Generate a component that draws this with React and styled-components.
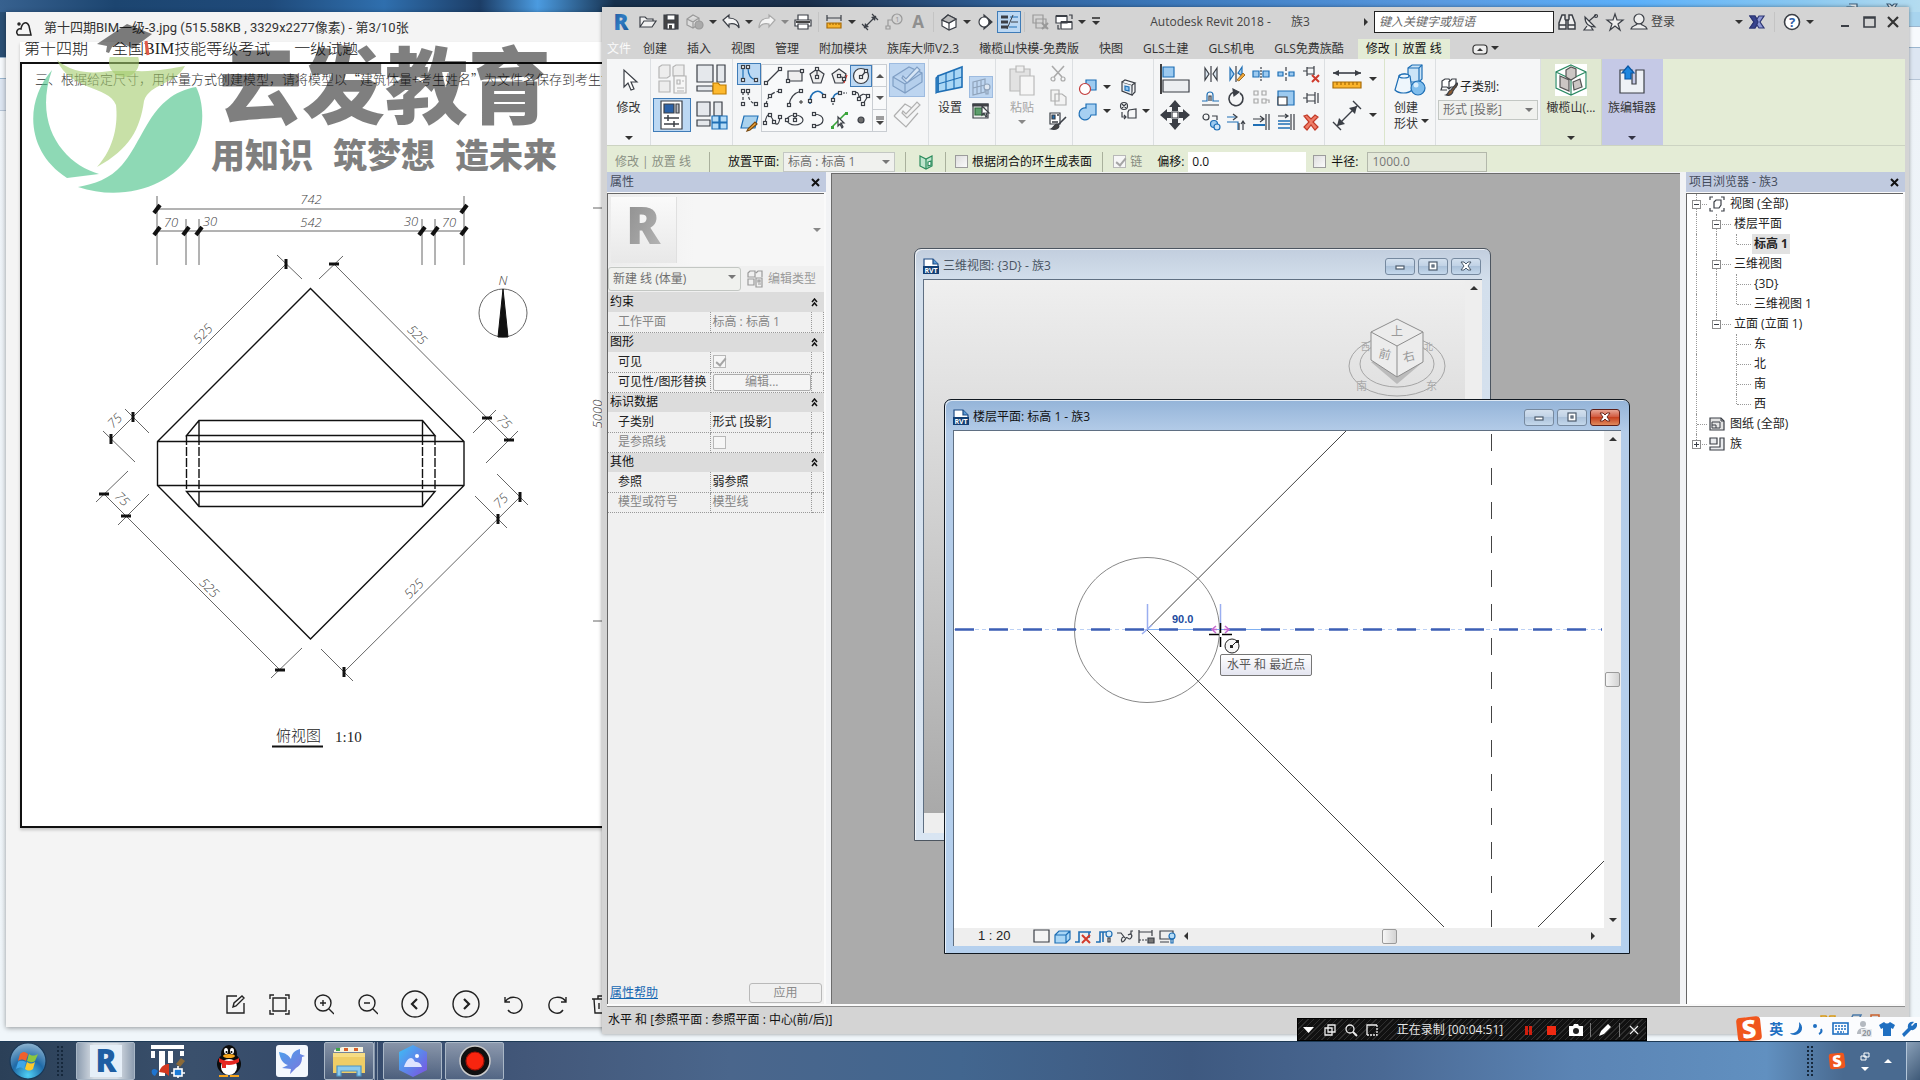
import React from 'react';
import styled, {createGlobalStyle, css} from 'styled-components';

const uiFont = '"Open Sans", "Noto Sans CJK SC", sans-serif';
const ink = '#3b3f46';
const blue = '#1f6fb5';

const GlobalStyle = createGlobalStyle`
  * {
    box-sizing: border-box;
  }
  body {
    margin: 0;
    overflow: hidden;
    font-family: ${uiFont};
    font-size: 12px;
    line-height: 16px;
    color: #222;
  }
  button,
  input,
  select {
    font: inherit;
    color: inherit;
    margin: 0;
    padding: 0;
    border: none;
    border-radius: 0;
    background: none;
  }
  svg {
    display: block;
    flex: none;
  }
  svg text {
    font-family: ${uiFont};
  }
`;

/* ---------- icons ---------- */

const Svg = ({w = 22, h = 22, children, ...rest}) => (
  <svg
    width={w}
    height={h}
    viewBox={`0 0 ${w} ${h}`}
    fill="none"
    stroke={ink}
    strokeWidth="1.2"
    aria-hidden="true"
    {...rest}
  >
    {children}
  </svg>
);

const Node = ({x, y}) => (
  <rect x={x - 1.5} y={y - 1.5} width="3" height="3" fill="#fff" />
);

const Caret = styled.i`
  flex: none;
  width: 0;
  height: 0;
  border: 4px solid transparent;
  border-top: 4px solid ${(p) => p.$color || '#333'};
  border-bottom: none;
  transform: rotate(${(p) => p.$turn || 0}deg);
`;

const RevitLogo = ({size = 20, gray}) => (
  <Svg w={size} h={size} stroke="none">
    <defs>
      <linearGradient id={gray ? 'rg' : 'rb'} x1="0" y1="0" x2="1" y2="1">
        <stop offset="0" stopColor={gray ? '#8d8d8d' : '#1d4f91'} />
        <stop offset="0.5" stopColor={gray ? '#a0a0a0' : '#2f7cc4'} />
        <stop offset="1" stopColor={gray ? '#b9b9b9' : '#174a86'} />
      </linearGradient>
    </defs>
    <text
      x={size / 2}
      y={size * 0.9}
      textAnchor="middle"
      fontSize={size * 1.1}
      fontWeight="800"
      fill={`url(#${gray ? 'rg' : 'rb'})`}
    >
      R
    </text>
  </Svg>
);

const OpenIcon = () => (
  <Svg>
    <path d="M4 16V6h5l2 2h6v2M4 16l4-6h12l-4 6z" fill="#f1f1f1" />
  </Svg>
);
const SaveIcon = () => (
  <Svg>
    <path d="M4 4h14v14H4z" fill="#444" />
    <path d="M7 4h8v5H7zM7 12h8v6H7z" fill="#fff" />
    <path d="M9 14h3v4H9z" fill="#444" stroke="none" />
  </Svg>
);
const CubesIcon = () => (
  <Svg stroke="#999">
    <path d="M3 8l6-4 6 3v6l-6 4-6-3zM3 8l6 3 6-4M9 11v6" fill="#ddd" />
    <circle cx="15" cy="14" r="4" fill="#aaa" />
  </Svg>
);
const UndoIcon = ({color = ink, flip}) => (
  <Svg stroke={color}>
    <path
      d="M3 9l6-5v3c6 0 10 3 10 10-2-4-5-5-10-4v3z"
      fill="#f4f4f4"
      transform={flip ? 'translate(22 0) scale(-1 1)' : undefined}
    />
  </Svg>
);
const PrintIcon = () => (
  <Svg>
    <path d="M6 9V4h10v5M3 9h16v6H3z" fill="#fff" />
    <path d="M6 13h10v5H6z" fill="#fff" />
    <path d="M4 10h14v2H4z" fill="#444" stroke="none" />
  </Svg>
);
const RulerIcon = () => (
  <Svg>
    <path d="M4 7h14M4 4v6M18 4v6" />
    <path d="M4 12h14v5H4z" fill="#f7b32b" stroke="#a86b06" />
    <path d="M7 12v2M10 12v2M13 12v2M16 12v2" stroke="#a86b06" />
  </Svg>
);
const DimIcon = () => (
  <Svg>
    <path d="M5 17L17 5M3 13l6 6M13 3l6 6" />
    <path d="M5 17l1-5 4 4zM17 5l-5 1 4 4z" fill={ink} stroke="none" />
  </Svg>
);
const TagIcon = () => (
  <Svg stroke="#999">
    <circle cx="14" cy="8" r="5" />
    <path d="M9 9H5v6M3 15h4v3H3z" />
    <text x="12" y="11" fontSize="8" fill="#999" stroke="none">1</text>
  </Svg>
);
const LetterIcon = () => (
  <Svg stroke="none">
    <text x="11" y="17" textAnchor="middle" fontSize="17" fontWeight="700" fill="#8f8f8f">A</text>
  </Svg>
);
const HouseIcon = () => (
  <Svg>
    <path d="M4 9l6-5 8 4v8l-7 3-7-4z" fill="#fff" />
    <path d="M4 9l7 3v7M11 12l7-4" />
    <path d="M4 9l6-5 8 4-7 4z" fill="#bbb" />
  </Svg>
);
const SectionIcon = () => (
  <Svg>
    <path d="M10 4l8 7-8 7z" fill="#333" />
    <circle cx="10" cy="11" r="5" fill="#fff" />
  </Svg>
);
const ThinLinesIcon = () => (
  <Svg>
    <path d="M3 6h7M3 11h7M3 16h7" strokeWidth="3" />
    <path d="M12 6h8M11 16h8" stroke={blue} />
    <path d="M9 18l6-14M13 11h7" strokeWidth="1" />
  </Svg>
);
const CloseHiddenIcon = () => (
  <Svg stroke="#999">
    <path d="M4 4h10v8H4zM7 8h10v9H7z" />
    <path d="M13 12l6 6M19 12l-6 6" strokeWidth="2" />
  </Svg>
);
const SwitchIcon = () => (
  <Svg>
    <path d="M3 5h11v7H3zM8 11h11v7H8z" fill="#fff" />
    <path d="M3 5h11M8 11h11" strokeWidth="2" />
    <path d="M16 4h3v4M5 14v4h2" />
  </Svg>
);
const BinocularsIcon = () => (
  <Svg>
    <path
      d="M6 4h3v4l1 2v8H3v-6zM16 4h-3v4l-1 2v8h7v-6zM10 9h2M3 14h7M12 14h7"
      fill="#eee"
      strokeWidth="1.5"
    />
  </Svg>
);
const DishIcon = () => (
  <Svg>
    <path d="M5 6c0 7 4 10 10 10zM9 10l7-6M7 15l-3 4h9l-2-3" fill="#eee" />
    <circle cx="16" cy="5" r="1.5" />
  </Svg>
);
const StarIcon = () => (
  <Svg>
    <path d="M11 3l2 6h6l-5 4 2 6-5-4-5 4 2-6-5-4h6z" fill="#eee" />
  </Svg>
);
const PersonIcon = () => (
  <Svg>
    <circle cx="11" cy="8" r="5" fill="#eee" />
    <path d="M3 18c1-4 5-3 6-5h4c1 2 5 1 6 5z" fill="#eee" />
  </Svg>
);
const ExchangeIcon = () => (
  <Svg stroke="#2d3674">
    <path d="M4 5h5l2 3 2-3h5l-4 6 4 6h-5l-2-3-2 3H4l4-6z" fill="#8e98d6" />
    <path d="M4 5h5l3 6-3 6H4l4-6z" fill="#38448f" />
  </Svg>
);
const HelpIcon = () => (
  <Svg>
    <circle cx="11" cy="11" r="7.5" fill="#fff" strokeWidth="1.6" />
    <text x="11" y="16" textAnchor="middle" fontSize="13" fontWeight="700" fill="#2f5ea8" stroke="none">?</text>
  </Svg>
);

const CursorIcon = () => (
  <Svg w={32} h={32}>
    <path d="M11 6v17l4-4 3 7 3-1-3-7h6z" fill="#fff" />
  </Svg>
);
const PropsGrayIcon = () => (
  <Svg w={32} h={32} stroke="#b4b4b4">
    <path d="M3 4l3-2h8v11l-3 2H3zM17 4l3-2h8v11h-11zM3 18h11v11H3z" fill="#ededed" />
    <path d="M18 13h12v17H18z" fill="#f6f6f6" />
    <path d="M21 17h3v4h-3zM26 18h2M21 25h7M21 28h7" />
  </Svg>
);
const FamilyFolderIcon = () => (
  <Svg w={32} h={32}>
    <path d="M1 2h16v17H1zM21 2h8v17h-8zM1 23h16v5H1z" fill="#e5e8ec" />
    <path d="M17 20h5l2 2h6v9H17z" fill="#fdb92e" stroke="#c07c00" />
  </Svg>
);
const PropertiesIcon = () => (
  <Svg w={32} h={32}>
    <path d="M5 2h21v28H5z" fill="#fff" />
    <path d="M8 5h10v9H8z" fill="#2b62a8" />
    <path d="M20 5h3v9h-3z" fill="#b9bec6" />
    <path d="M8 19h15M8 25h15M12 16v6M18 22v6" strokeWidth="1.5" />
  </Svg>
);
const FamilyTypesIcon = () => (
  <Svg w={32} h={32}>
    <path d="M1 3h13v14H1zM18 3h8v14h-8zM1 21h13v6H1z" fill="#e5e8ec" />
    <path d="M16 17h7v6h-7zM24 17h7v6h-7zM16 24h7v6h-7zM24 24h7v6h-7z" fill="#b6dcf7" stroke={blue} />
  </Svg>
);
const ModelLineIcon = () => (
  <Svg>
    <path d="M5 5v12M10 5c0 7 3 11 8 12" stroke={blue} />
    <Node x={5} y={4} />
    <Node x={5} y={17} />
    <Node x={10} y={4} />
    <Node x={18} y={17} />
  </Svg>
);
const RefLineIcon = () => (
  <Svg>
    <path d="M5 5v12M10 5c0 7 3 11 8 12" strokeDasharray="3 2" />
    <Node x={5} y={4} />
    <Node x={5} y={17} />
    <Node x={10} y={4} />
    <Node x={18} y={17} />
  </Svg>
);
const RefPlaneIcon = () => (
  <Svg>
    <path d="M6 5h14l-3 12H3z" fill="#a9d2ee" stroke={blue} />
    <path d="M10 18l7-7 2 2-7 6-3 1z" fill="#f5a83b" stroke="#7a4a10" />
  </Svg>
);

const drawTools = [
  ['直线', <><path d="M4 18L18 4" /><Node x={4} y={18} /><Node x={18} y={4} /></>],
  ['矩形', <><path d="M4 6h14v10H4z" fill="#eee" /><Node x={4} y={16} /><Node x={18} y={6} /></>],
  ['内接多边形', <><path d="M11 4l7 5-3 9H7L4 9z" fill="#eee" /><path d="M11 4v8" /><Node x={11} y={4} /><Node x={11} y={12} /></>],
  ['外接多边形', <><path d="M11 4l7 5-3 9H7L4 9z" fill="#eee" /><path d="M11 11l5 2" /><path d="M16 18l3-8" stroke="#d8352a" /><Node x={11} y={11} /><Node x={16} y={14} /></>],
  ['圆形', <><circle cx="11" cy="11" r="7.5" fill="#f5f5f5" /><path d="M11 12l5-6" /><Node x={11} y={12} /><Node x={16} y={6} /></>],
  ['起点-终点-半径弧', <><path d="M4 18C5 10 10 5 18 4" strokeDasharray="4 2" /><Node x={4} y={18} /><Node x={8} y={9} /><Node x={18} y={4} /></>],
  ['圆心-端点弧', <><path d="M5 18C6 10 10 6 17 4" /><path d="M15 15h4M17 13v4" stroke="#333" strokeWidth="1" /><Node x={5} y={18} /><Node x={17} y={4} /></>],
  ['相切-端点弧', <><path d="M4 17C3 3 15 1 18 9" stroke={blue} strokeWidth="1.6" /><Node x={4} y={14} /><Node x={18} y={9} /></>],
  ['圆角弧', <><path d="M5 18v-4" strokeDasharray="2 1" /><path d="M5 13c0-4 2-7 7-7" stroke={blue} strokeWidth="1.6" /><path d="M12 6h7" strokeDasharray="2 1" /><Node x={5} y={13} /><Node x={12} y={6} /></>],
  ['样条曲线', <><path d="M4 6c4-2 5 1 5 5 2-4 5-5 9-2l-5 8" /><Node x={4} y={6} /><Node x={9} y={12} /><Node x={18} y={9} /><Node x={13} y={17} /></>],
  ['通过点样条', <><path d="M3 14C5 2 8 5 11 11s6 6 7-3" /><Node x={3} y={14} /><Node x={8} y={6} /><Node x={12} y={13} /><Node x={18} y={8} /></>],
  ['椭圆', <><ellipse cx="11" cy="11" rx="8" ry="5" /><path d="M11 11V6" /><Node x={3} y={11} /><Node x={11} y={11} /><Node x={11} y={6} /></>],
  ['半椭圆', <><path d="M8 5c12 1 12 11 0 12" /><Node x={8} y={5} /><Node x={8} y={17} /></>],
  ['拾取线', <><path d="M4 18L18 4" stroke="#3aa53a" strokeWidth="1.6" /><path d="M10 8v9l2-2 2 4 1-1-2-4h3z" fill="#fff" /><path d="M3 17h3v3H3zM17 3h3v3h-3z" fill="#3aa53a" stroke="none" /></>],
  ['点图元', <circle cx="11" cy="11" r="3" fill="#6d6d6d" />],
];

const DrawFaceIcon = ({lines}) => (
  <Svg w={34} h={32} stroke={lines ? '#b0b0b0' : '#7f9ec4'}>
    {!lines && <path d="M3 13L19 3l13 6v9L15 29 3 22zM3 13l12 7 17-11M15 20v9" fill="#b5cfec" />}
    {lines && <path d="M4 17L15 5l7 4M28 14L16 28 4 17" />}
    <path d="M12 14l5 5L30 6l-3-3-11 12-3-3z" fill={lines ? '#f3f3f3' : '#d6e5f5'} />
  </Svg>
);
const WorkPlaneIcon = () => (
  <Svg w={32} h={32} stroke={blue}>
    <path d="M4 12l24-9v20L4 28z" fill="#a9d6f5" strokeWidth="1.6" />
    <path d="M12 9v18M20 6v19M4 20l24-7" />
    <path d="M4 12l-2 2v15l2-1z" fill="#3c8ccb" />
  </Svg>
);
const ShowPlaneIcon = () => (
  <Svg stroke="#8fa3bb">
    <path d="M3 6l12-3v13L3 19zM7 5v13M11 4v13M3 12l12-3" />
    <circle cx="17" cy="11" r="3" fill="#dfe8f2" />
    <path d="M16 14h2v4h-2z" />
  </Svg>
);
const ViewerIcon = () => (
  <Svg>
    <path d="M3 4h15v14H3z" fill="#eee" />
    <path d="M3 4h15v2H3z" fill="#444" />
    <path d="M5 8h9v7H5z" fill="#5d9e6c" stroke="#2f6b3d" />
    <path d="M12 6v9l2-2 2 4 1-1-1-3h3z" fill="#fff" />
  </Svg>
);
const PasteIcon = () => (
  <Svg w={32} h={32} stroke="#b9b9b9">
    <path d="M4 5h20v22H4z" fill="#e2e2e2" />
    <path d="M10 2h8v6h-8z" fill="#eee" />
    <path d="M14 12h14v19H14z" fill="#f6f6f6" />
  </Svg>
);
const CutIcon = () => (
  <Svg stroke="#aaa">
    <path d="M5 4l10 11M17 4L7 15" strokeWidth="1.6" />
    <circle cx="6" cy="17" r="2" />
    <circle cx="16" cy="17" r="2" />
  </Svg>
);
const CopyClipIcon = () => (
  <Svg stroke="#b0b0b0">
    <path d="M4 4h8v11H4zM8 8h7l4 3v8H8z" fill="#f3f3f3" />
  </Svg>
);
const MatchIcon = () => (
  <Svg>
    <path d="M3 3h10v11H3z" fill="#fff" />
    <path d="M5 5h3v4H5z" fill={blue} />
    <path d="M10 5h2M5 12h6M19 7l-9 9" strokeWidth="1.6" />
    <path d="M10 14c-3 0-3 4-6 5 4 1 8 0 8-3z" fill="#444" />
  </Svg>
);
const CutGeoIcon = () => (
  <Svg>
    <path d="M9 4h10v10H9z" fill="#9ccaf0" stroke={blue} />
    <circle cx="8" cy="13" r="5.5" fill="#fff" stroke="#c23b3b" />
  </Svg>
);
const JoinGeoIcon = () => (
  <Svg stroke={blue}>
    <path d="M9 4h10v11h-5a6 6 0 1 1-5-7z" fill="#a6d0f2" />
  </Svg>
);
const OpeningIcon = () => (
  <Svg>
    <path d="M5 6l10 3v10L5 15z" fill="#e8edf2" />
    <path d="M5 6l3-2 10 3-3 2M18 7v9l-3 3" fill="#f6f8fa" />
    <path d="M8 10l4 1v4l-4-1z" fill="#8cc2ee" stroke={blue} />
  </Svg>
);
const PaintIcon = () => (
  <Svg>
    <circle cx="7" cy="6" r="3.5" />
    <path d="M5 4l4 4M9 4L5 8M5 12v5h4M7 15l2 2-2 2M12 10l7-1v9h-8v-6z" />
  </Svg>
);
const AlignIcon = () => (
  <Svg w={32} h={32}>
    <path d="M2 1v30" stroke="#111" strokeWidth="1.6" />
    <path d="M4 4h11v10H4z" fill="#9ccaf0" stroke={blue} />
    <path d="M4 17h26v12H4z" fill="#eceef1" />
  </Svg>
);
const MoveIcon = () => (
  <Svg w={32} h={32} stroke="none" fill="#3b3f46">
    <path d="M16 1l6 7h-3v4h-6V8h-3zM16 31l6-7h-3v-4h-6v4h-3zM1 16l7-6v3h4v6H8v3zM31 16l-7-6v3h-4v6h4v3z" />
    <path d="M13 13h6v6h-6z" fill="#fff" stroke={ink} />
  </Svg>
);

const modifyTools = [
  ['镜像-拾取轴', <><path d="M5 5l4 6-4 6zM17 5l-4 6 4 6z" fill="#dbe6f0" /><path d="M11 3v16" /></>],
  ['镜像-绘制轴', <><path d="M5 5l4 6-4 6z" fill="#9ccaf0" stroke={blue} /><path d="M17 4l-4 6 4 3z" fill="#9ccaf0" stroke={blue} /><path d="M11 3v16" /><path d="M12 17l6-7 2 2-6 6z" fill="#f5a83b" stroke="#8a5a10" strokeWidth="0.8" /></>],
  ['拆分图元', <><path d="M3 8h6v6H3zM13 8h6v6h-6z" fill="#9ccaf0" stroke={blue} /><path d="M11 4v14" strokeDasharray="2 1" /></>],
  ['用间隙拆分', <><path d="M3 9h5v4H3zM14 9h5v4h-5z" fill="#9ccaf0" stroke={blue} /><path d="M11 4v4M11 10v2M11 14v4" /></>],
  ['解锁', <><path d="M3 8h4M7 4v9M7 5h7V3M7 11h7M14 3v9" /><path d="M12 12l7 7M19 12l-7 7" stroke="#cf3a2c" strokeWidth="2" /></>],
  ['偏移', <><path d="M2 14h5V8c0-4 6-4 6 0v6h6" stroke={blue} /><path d="M2 18h17M9 14V9h2v5" /></>],
  ['旋转', <><path d="M9 5a7 7 0 1 0 6 1" strokeWidth="1.6" /><path d="M8 2l6 3-5 4z" fill={ink} /></>],
  ['阵列', <path d="M4 4h4v4H4zM12 4h4v4h-4zM4 12h4v4H4zM12 12h4v4h-4zM16 13h3v3" stroke="#a8a8a8" />],
  ['缩放', <><path d="M3 4h16v14H3z" fill="#9ccaf0" stroke={blue} /><path d="M3 10h9v8H3z" fill="#fff" /></>],
  ['锁定', <path d="M3 11h4M7 6v10M7 8h8V5M7 14h8v3M15 5v12M18 6v10" />],
  ['复制', <><circle cx="6" cy="6" r="3" /><circle cx="14" cy="13" r="3.5" fill="#9ccaf0" stroke={blue} /><circle cx="17" cy="16" r="3" fill="#cde4f7" stroke={blue} /><path d="M12 5h5v4" /></>],
  ['修剪为角', <><path d="M2 6h9M2 11h11v8" stroke={blue} /><path d="M8 3l4 3-4 3M14 12v7M18 11v8M16 13l2-3 2 3" /></>],
  ['修剪单个', <><path d="M3 8h10M10 5l4 3-4 3M16 3v16M19 3v16" /><path d="M3 14h12" stroke={blue} strokeWidth="2" /></>],
  ['修剪多个', <><path d="M3 5h10M10 3l3 2-3 2M16 3v16M19 3v16" /><path d="M3 10h12M3 13h12M3 17h12" stroke={blue} strokeWidth="1.6" /></>],
  ['删除', <path d="M4 5l3-1 4 4 4-4 3 2-5 5 5 5-3 3-4-5-4 5-3-3 5-5z" fill="#ef7d68" stroke="#c23a28" />],
];

const MeasureIcon = () => (
  <Svg w={32} h={26}>
    <path d="M2 7h28" strokeWidth="1.6" />
    <path d="M2 7l6-3v6zM30 7l-6-3v6z" fill={ink} stroke="none" />
    <path d="M2 16h28v6H2z" fill="#fbb42c" stroke="#a86b06" />
    <path d="M6 16v3M10 16v3M14 16v3M18 16v3M22 16v3M26 16v3" stroke="#a86b06" />
  </Svg>
);
const AlignedDimIcon = () => (
  <Svg w={32} h={32}>
    <path d="M6 27L26 7M2 23l8 8M22 2l8 8" strokeWidth="1.4" />
    <path d="M6 27l2-8 6 6zM26 7l-8 2 6 6z" fill={ink} stroke="none" />
  </Svg>
);
const CreateFormIcon = () => (
  <Svg w={32} h={32} stroke={blue}>
    <path d="M14 4l4-3h10v14l-3 3H14z" fill="#cbe4f7" />
    <path d="M25 4v14M14 4h11l3-3" />
    <path d="M1 26L5 12c3-3 9-3 11 0l2 14c-4 4-13 4-17 0z" fill="#eef6fc" />
    <ellipse cx="10" cy="12" rx="5" ry="2" />
    <circle cx="24" cy="24" r="7" fill="#7fbdec" />
    <circle cx="22" cy="21" r="2.5" fill="#d8edfb" stroke="none" />
  </Svg>
);
const SubCategoryIcon = () => (
  <Svg w={18} h={18}>
    <path d="M2 3l3-2h4l1 2 2-2h4v8h-5l-2 2-2-2H2zM2 9l-1 3h6M9 3v8" fill="#fff" />
    <path d="M17 5l-6 7c-3 0-2 4-5 5 4 1 7-1 7-4l5-7z" fill="#8a5a32" />
  </Svg>
);
const OliveIcon = () => (
  <Svg w={32} h={32} stroke="#2c8a63">
    <path d="M0 0h32v32H0z" fill="#fff" stroke="none" />
    <path d="M16 1l15 7v16l-15 7-15-7V8zM1 8l15 7 15-7M16 15v16" />
    <path d="M11 6l5-3 5 2v8l-5 3-5-3zM5 12l9 4v11l-9-4zM18 18l7-3 2 8-8 3z" fill="#ccc6c4" stroke="#555" />
  </Svg>
);
const LoadIcon = () => (
  <Svg w={32} h={32}>
    <path d="M4 6h12v14h4V6h8v23H4z" fill="#eef1f6" />
    <path d="M12 2l6 7h-3v6H9V9H6z" fill="#1d87e0" stroke="#0b57a4" />
  </Svg>
);
const PlacementIcon = () => (
  <Svg w={16} h={16} stroke="#2b8b5c">
    <path d="M2 2l6 3 6-3v10l-6 3-6-3z" fill="#bfe5cd" />
    <path d="M8 5v10M10 8l3-1v4l-3 1z" fill="#fff" />
  </Svg>
);
const TypeEditIcon = () => (
  <Svg w={18} h={18} stroke="#9a9a9a">
    <path d="M2 3l2-2h5v6H2zM10 3l2-2h4v6M2 9h6v6H2zM10 8h6v9h-6zM12 10h2v2h-2zM12 14h3" />
  </Svg>
);
const RvtIcon = () => (
  <Svg w={16} h={16} stroke="#1d4a83">
    <path d="M1 1h9l5 5v9H1z" fill="#fff" />
    <path d="M10 1v5h5" fill="#5b9bd8" />
    <path d="M0 8h16v8H0z" fill="#123f75" stroke="none" />
    <text x="8" y="15" textAnchor="middle" fontSize="7" fontWeight="700" fill="#fff" stroke="none">RVT</text>
  </Svg>
);

/* ---------- shared controls ---------- */

const IconButton = styled.button`
  flex: none;
  display: flex;
  align-items: center;
  justify-content: center;
  width: ${(p) => p.$w || 24}px;
  height: ${(p) => p.$h || 22}px;
  ${(p) =>
    p.$active &&
    css`
      background: #bcd8f3;
      border: 1px solid #3f7cb8;
    `}
  ${(p) =>
    p.$faded &&
    css`
      background: #bdd5f0;
      border: 1px solid #9dbbe0;
    `}
`;

const CaretButton = styled.button`
  flex: none;
  display: flex;
  align-items: center;
  justify-content: center;
  width: 12px;
  height: 22px;
`;

const SelectBox = styled.span`
  position: relative;
  display: flex;
  width: ${(p) => p.$w};
  height: ${(p) => p.$h || 20}px;
  &::after {
    content: '';
    position: absolute;
    right: 5px;
    top: 8px;
    border: 4px solid transparent;
    border-top-color: #777;
    border-bottom: none;
    pointer-events: none;
  }
  select {
    appearance: none;
    width: 100%;
    padding: 0 4px;
    border: 1px solid #c3c7c3;
    border-radius: ${(p) => (p.$round ? 3 : 0)}px;
    background: #f0f1ee;
    color: #6f6f6f;
    opacity: 1;
  }
`;

const Check = styled.input.attrs({type: 'checkbox'})`
  appearance: none;
  flex: none;
  display: block;
  width: 13px;
  height: 13px;
  border: 1px solid #9c9c9c;
  background: linear-gradient(135deg, #dedede, #fafafa);
  &:disabled {
    border-color: #b8b8b8;
    background: #f6f6f6;
  }
  &:checked::before {
    content: '';
    display: block;
    width: 4px;
    height: 8px;
    margin: 0 0 0 4px;
    border: solid #a5a5a5;
    border-width: 0 2px 2px 0;
    transform: rotate(40deg);
  }
`;

const Text = styled.span`
  color: ${(p) => p.$color || 'inherit'};
  white-space: nowrap;
`;

/* ---------- desktop ---------- */

const Desktop = styled.div`
  height: 100vh;
  display: flex;
  flex-direction: column;
`;

const Workspace = styled.main`
  position: relative;
  flex: 1;
  min-height: 0;
  overflow: hidden;
  background: linear-gradient(#eef3f8, #f0f6fa);
`;

const Wallpaper = styled.div`
  height: 12px;
  padding: 3px 22px 0 0;
  display: flex;
  justify-content: flex-end;
  gap: 28px;
  background: linear-gradient(
    90deg,
    #37618f 0%,
    #1c4570 6%,
    #1f4a7a 14%,
    #2f6fae 20%,
    #1c3d66 25%,
    #4b9be0 28%,
    #16304d 32%,
    #1a2f4b 42%,
    #2f5f97 52%,
    #3a76b8 60%,
    #4a8ad0 68%,
    #5a9ae0 75%,
    #5bb0fa 85%,
    #8ac8f0 94%,
    #b4dcf0 100%
  );
`;

const BackWindow = styled.div`
  display: flex;
  flex-direction: column;
  margin-left: ${(p) => (p.$right ? 'auto' : 0)};
  width: 12px;
  span {
    height: ${(p) => (p.$right ? 14 : 45)}px;
    background: ${(p) => (p.$right ? '#a8d4ee' : '#2b5075')};
  }
  b {
    height: 22px;
    border: solid #9bb6cf;
    border-width: 1px 0;
    background: #f7fafd;
  }
  i {
    height: 32px;
    border-bottom: 1px solid #b5c4d6;
    background: #dde6f2;
  }
`;

const BackRow = styled.div`
  display: flex;
`;

/* ---------- image viewer ---------- */

const Viewer = styled.section`
  position: absolute;
  left: 6px;
  top: 12px;
  bottom: 14px;
  width: 640px;
  display: flex;
  flex-direction: column;
  background: #f4f4f4;
  box-shadow: 0 1px 5px rgba(0, 0, 0, 0.4);
`;

const ViewerTitle = styled.header`
  flex: none;
  height: 30px;
  padding: 2px 9px 0;
  display: flex;
  align-items: center;
  gap: 12px;
  color: #333;
  font-family: Roboto, 'Noto Sans CJK SC', sans-serif;
  font-size: 13px;
`;

const Sheet = styled.article`
  position: relative;
  flex: none;
  height: 786px;
  margin-left: 14px;
  background: #fff;
  overflow: hidden;
  box-shadow: 0 2px 3px rgba(0, 0, 0, 0.2);
`;

const SheetHeading = styled.h1`
  height: 20px;
  margin: 0;
  padding-left: 4px;
  display: flex;
  align-items: flex-end;
  gap: 24px;
  overflow: hidden;
  font: 300 16px/26px 'Liberation Serif', 'Noto Sans CJK SC', serif;
  color: #222;
  white-space: nowrap;
`;

const SheetFrame = styled.div`
  height: 766px;
  border: 2px solid #111;
  border-right: none;
  p {
    margin: 0;
    padding: 5px 13px;
    font: 300 13px/20px 'Noto Sans CJK SC', sans-serif;
    white-space: nowrap;
    color: #333;
  }
`;

const Drawing = styled.svg`
  position: absolute;
  inset: 0;
  width: 100%;
  height: 100%;
`;

const Watermark = styled.div`
  position: absolute;
  left: 26px;
  top: 12px;
  display: flex;
  gap: 8px;
  color: rgba(0, 0, 0, 0.5);
`;

const LogoHolder = styled.div`
  width: 171px;
  padding-top: 33px;
`;

const CapHolder = styled.div`
  position: absolute;
  left: 65px;
  top: 0;
`;

const WatermarkText = styled.div`
  display: flex;
  flex-direction: column;
  gap: 16px;
  padding-top: 17px;
  font-family: 'Noto Sans CJK SC', sans-serif;
  strong {
    padding-left: 8px;
    font-size: 83px;
    font-weight: 900;
    line-height: 80px;
  }
  span {
    display: flex;
    gap: 20px;
    font-size: 34px;
    font-weight: 700;
    line-height: 34px;
  }
`;

const ViewerTools = styled.footer`
  margin-top: auto;
  height: 46px;
  padding-left: 219px;
  display: flex;
  align-items: center;
  gap: 23px;
`;

const tick = (x, y, kind) => {
  if (kind === 's') {
    return <path key={`${x}-${y}`} d={`M${x - 3} ${y + 4}l6 -8`} strokeWidth="4" />;
  }
  const d = kind === 'v' ? `M${x} ${y - 5}v10` : `M${x - 5} ${y}h10`;
  return <path key={`${x}-${y}`} d={d} strokeWidth="3" />;
};

const dimTicks = [
  [157, 209, 's'], [464, 209, 's'],
  [157, 231, 's'], [186, 231, 's'], [199, 231, 's'],
  [422, 231, 's'], [435, 231, 's'], [464, 231, 's'],
  [286, 264, 'v'], [133, 417, 'v'], [111, 439, 'v'],
  [334, 264, 'h'], [487, 418, 'h'], [509, 440, 'h'],
  [104, 494, 'h'], [126, 516, 'h'], [280, 670, 'h'],
  [344, 672, 'v'], [498, 519, 'v'], [520, 497, 'v'],
];

const dimLabels = [
  ['742', 311, 204], ['70', 171, 227], ['30', 210, 226], ['542', 311, 227],
  ['30', 411, 226], ['70', 449, 227],
  ['525', 206, 337, -45], ['525', 414, 338, 45],
  ['525', 206, 591, 45], ['525', 417, 592, -45],
  ['75', 118, 424, -45], ['75', 501, 425, 45],
  ['75', 119, 502, 45], ['75', 504, 504, -45],
  ['5000', 602, 414, -90], ['N', 503, 285],
];

const PlanDrawing = () => (
  <Drawing viewBox="20 42 626 786" preserveAspectRatio="xMinYMin slice" fill="none" stroke="#111">
    <g stroke="#666">
      <path d="M157 209H464M157 231H464M157 196V265M464 196V265M186 219V265M199 219V265M422 219V265M435 219V265" />
      <path d="M286 264L111 439M277 255l25 24M125 409l24 24M103 431l32 31" />
      <path d="M334 264L509 440M343 256l-24 23M496 410l-23 23M518 431l-32 32" />
      <path d="M104 494L280 670M96 502l32 -31M118 525l31 -31M271 678l31 -30" />
      <path d="M344 672L520 497M353 681l-32 -32M507 528l-32 -32M528 505l-31 -31" />
      <path d="M593 208h10M593 621h10" />
      <circle cx="503" cy="313" r="24" />
    </g>
    <g strokeWidth="1.4">
      <path d="M157.5 441.5L310.5 288.5L464 441.5V485.5L310.5 639L157.5 485.5zM157.5 441.5H464M157.5 485.5H464" />
      <path d="M199 420.5H422.5L435 435.5H186.5zM186.5 491.5H435L422.5 506.5H199zM199 420V436M422.5 420V436M199 491V507M422.5 491V507" />
      <path d="M186.5 436V491M199 436V491M422.5 436V491M435 436V491" strokeDasharray="9 2" />
    </g>
    {dimTicks.map(([x, y, kind]) => tick(x, y, kind))}
    <path d="M503 289l5 48h-10z" fill="#111" />
    <path d="M272 746.5h51" strokeWidth="2" />
    <g fill="#444" stroke="none" fontSize="13" fontStyle="italic" textAnchor="middle">
      {dimLabels.map(([label, x, y, angle]) => (
        <text
          key={label + x + y}
          x={x}
          y={y}
          transform={angle ? `rotate(${angle} ${x} ${y})` : undefined}
          fontWeight="300"
        >
          {label}
        </text>
      ))}
    </g>
    <text x="276" y="741" fontSize="15" fontWeight="300" fill="#222" stroke="none">俯视图</text>
    <DrawingScale x="335" y="742" fontSize="15" fill="#222" stroke="none">1:10</DrawingScale>
  </Drawing>
);

const DrawingScale = styled.text`
  && {
    font-family: 'Liberation Serif', serif;
  }
`;

const SchoolLogo = () => (
  <svg width="178" height="142" viewBox="0 0 178 142" fill="none" aria-hidden="true">
    <path d="M20 13C-8 45-6 95 35 121l32-4C34 108 0 70 20 13z" fill="#43c083" fillOpacity="0.6" />
    <path d="M164 30c-46 8-52 54-74 78-12 14-28 19-44 22 44 15 94 0 114-35 14-20 12-50 4-65z" fill="#43c083" fillOpacity="0.6" />
    <path d="M25 3c15 13 35 14 53 11h25c20 1 38-3 50-5-10 19-35 17-41 35-4 28-14 48-47 66 18-20 21-44 19-62C76 28 38 34 25 3z" fill="#a4cb6c" fillOpacity="0.6" />
    <circle cx="92" cy="5" r="15" fill="#a4cb6c" fillOpacity="0.6" />
  </svg>
);

const GradCap = () => (
  <svg width="56" height="34" viewBox="0 0 56 34" aria-hidden="true">
    <path d="M0 20L30 0l25 10-20 15c-6-5-13-7-20-2l-3 6-3-1 1-6z" fill="#000" fillOpacity="0.5" />
    <path d="M49 17l2 14" stroke="#e05a4a" strokeWidth="3" />
  </svg>
);

const ToolGlyph = ({children, size = 21}) => (
  <Svg w={size} h={size} stroke="#222" strokeWidth="1.4">{children}</Svg>
);

const viewerTools = [
  ['编辑', <path d="M12 2H2v17h17V9M8 13l1-4 8-7 2 2-8 8z" />],
  ['适应窗口', <path d="M1 5V1h4M16 1h4v4M20 16v4h-4M5 20H1v-4M4 4h13v13H4z" />],
  ['放大', <path d="M18 9a8 8 0 1 1-16 0 8 8 0 0 1 16 0zM16 15l5 5M7 9h6M10 6v6" />],
  ['缩小', <path d="M18 9a8 8 0 1 1-16 0 8 8 0 0 1 16 0zM16 15l5 5M7 9h6" />],
  ['上一张', <><circle cx="14" cy="14" r="13" /><path d="M16 9l-5 5 5 5" strokeWidth="2.2" /></>, 28],
  ['下一张', <><circle cx="14" cy="14" r="13" /><path d="M12 9l5 5-5 5" strokeWidth="2.2" /></>, 28],
  ['向左旋转', <path d="M2 3v5h5M2 8c4-7 16-6 17 2 1 9-10 12-14 6" />],
  ['向右旋转', <path d="M19 3v5h-5M19 8C15 1 3 2 2 10c-1 9 10 12 14 6" />],
  ['删除', <path d="M1 5h19M7 5V2h7v3M3 5l1 14h13l1-14M8 9v6M13 9v6" />],
];

function ImageViewer() {
  return (
    <Viewer>
      <ViewerTitle>
        <Svg w={17} h={17} stroke="#222" strokeWidth="1.5">
          <path d="M3 15c-3-3 0-7 3-6 1-7 6-8 8-3l2 9z" />
          <circle cx="4" cy="4" r="1" />
        </Svg>
        <Text>第十四期BIM一级-3.jpg (515.58KB , 3329x2277像素) - 第3/10张</Text>
      </ViewerTitle>
      <Sheet>
        <SheetHeading>
          <span>第十四期</span>
          <span>全国BIM技能等级考试</span>
          <span>一级试题</span>
        </SheetHeading>
        <SheetFrame>
          <p>三、根据给定尺寸，用体量方式创建模型，请将模型以“建筑体量+考生姓名”为文件名保存到考生文件夹中</p>
        </SheetFrame>
        <PlanDrawing />
      </Sheet>
      <Watermark>
        <CapHolder>
          <GradCap />
        </CapHolder>
        <LogoHolder>
          <SchoolLogo />
        </LogoHolder>
        <WatermarkText>
          <strong>云发教育</strong>
          <span>
            <b>用知识</b>
            <b>筑梦想</b>
            <b>造未来</b>
          </span>
        </WatermarkText>
      </Watermark>
      <ViewerTools>
        {viewerTools.map(([name, glyph, size]) => (
          <IconButton key={name} aria-label={name} $w={size || 21} $h={28}>
            <ToolGlyph size={size}>{glyph}</ToolGlyph>
          </IconButton>
        ))}
      </ViewerTools>
    </Viewer>
  );
}

/* ---------- revit window ---------- */

const Revit = styled.section`
  position: absolute;
  left: 602px;
  right: 11px;
  top: 7px;
  bottom: 7px;
  display: flex;
  flex-direction: column;
  padding: 0 4px 0 5px;
  background: #d4d4d4;
  box-shadow: 0 0 4px rgba(0, 0, 0, 0.4);
`;

const TitleBar = styled.header`
  flex: none;
  height: 31px;
  display: flex;
  align-items: center;
  padding-bottom: 2px;
  color: #444;
`;

const Divider = styled.i`
  flex: none;
  width: 1px;
  height: ${(p) => p.$h || 20}px;
  margin: 0 ${(p) => (p.$gap === undefined ? 3 : p.$gap)}px;
  background: ${(p) => p.$color || '#c4c4c4'};
`;

const AppName = styled.h2`
  flex: 1;
  margin: 0;
  padding-right: 4px;
  display: flex;
  justify-content: center;
  gap: 20px;
  font-size: 12px;
  font-weight: 400;
`;

const Search = styled.input`
  width: 180px;
  height: 22px;
  margin: 0 1px 0 2px;
  padding: 0 4px;
  border: 1px solid #222;
  background: #fff;
  &::placeholder {
    color: #666;
    font-style: italic;
  }
`;

const Login = styled.button`
  width: 82px;
  text-align: left;
`;

const WindowKey = styled.button`
  width: 24px;
  height: 22px;
  display: flex;
  align-items: center;
  justify-content: center;
`;

const Tabs = styled.nav`
  flex: none;
  height: 21px;
  display: flex;
  align-items: flex-end;
  color: #333;
`;

const Tab = styled.button`
  height: 20px;
  padding: 0 10px;
  white-space: nowrap;
  ${(p) =>
    p.$file &&
    css`
      padding: 0 2px 0 0;
      color: #fafafa;
    `}
  ${(p) =>
    p.$active &&
    css`
      margin-left: 4px;
      padding: 0 8px;
      background: #e4ecd6;
      color: #111;
    `}
`;

const Ribbon = styled.div`
  flex: none;
  height: 87px;
  display: flex;
  background: #e4ecd6;
  border-bottom: 1px solid #ccd3c2;
`;

const RibbonPanel = styled.div`
  flex: none;
  width: ${(p) => p.$w}px;
  padding: ${(p) => p.$pad || '3px 2px'};
  display: flex;
  gap: ${(p) => p.$gap || 0}px;
  border-right: 1px solid ${(p) => p.$edge || '#dcdfe2'};
  background: ${(p) => p.$bg || '#f5f6f7'};
`;

const RibbonColumn = styled.div`
  display: flex;
  flex-direction: column;
  gap: ${(p) => (p.$gap === undefined ? 2 : p.$gap)}px;
  padding-top: ${(p) => p.$top || 0}px;
`;

const RibbonRow = styled.div`
  display: flex;
  align-items: center;
`;

const IconGrid = styled.div`
  display: grid;
  grid-template-columns: repeat(${(p) => p.$cols}, ${(p) => p.$cell}px);
  align-content: start;
  row-gap: ${(p) => p.$gap || 0}px;
  column-gap: ${(p) => p.$gap || 0}px;
`;

const BigButton = styled.button`
  width: ${(p) => p.$w}px;
  padding-top: 2px;
  display: flex;
  flex-direction: column;
  align-items: center;
  gap: 4px;
  color: ${(p) => p.$color || '#333'};
  line-height: 16px;
  > ${Caret} {
    margin-top: ${(p) => (p.$low ? 'auto' : 0)};
    margin-bottom: 2px;
  }
`;

const TwoLines = styled.span`
  display: flex;
  align-items: flex-end;
  gap: 3px;
  padding-left: 3px;
  > ${Caret} {
    margin-bottom: 9px;
  }
`;

const FormLabel = styled.label`
  display: flex;
  align-items: center;
  gap: 2px;
  padding-left: 2px;
`;

const Gallery = styled.div`
  display: flex;
  height: 68px;
  margin: 1px 2px 0 0;
  border: 1px solid #c9cdd2;
  background: #f8f9fa;
`;

const GalleryScroll = styled.div`
  width: 14px;
  display: flex;
  flex-direction: column;
  border-left: 1px solid #c9cdd2;
  button {
    flex: 1;
    display: flex;
    align-items: center;
    justify-content: center;
  }
  button + button {
    border-top: 1px solid #c9cdd2;
  }
`;

const Options = styled.form`
  flex: none;
  height: 26px;
  display: flex;
  align-items: center;
  padding: 5px 0 0 8px;
  background: #e4ecd6;
  color: #111;
  label {
    display: flex;
    align-items: center;
    gap: 4px;
    white-space: nowrap;
  }
`;

const NumberBox = styled.input`
  width: ${(p) => p.$w}px;
  height: 20px;
  padding: 0 4px;
  background: #fff;
  &:disabled {
    border: 1px solid #b3b8ab;
    background: #e4e9da;
    color: #777;
  }
`;

const Body = styled.div`
  flex: 1;
  min-height: 0;
  display: flex;
  background: #f2f3f5;
  border-bottom: 2px solid #fafafa;
`;

const Dock = styled.aside`
  flex: none;
  width: 219px;
  display: flex;
  flex-direction: column;
  background: #fafafa;
`;

const DockTitle = styled.header`
  flex: none;
  height: 20px;
  padding: 0 5px 0 3px;
  display: flex;
  align-items: center;
  justify-content: space-between;
  background: #c0cadf;
  color: #444c5c;
`;

const DockBody = styled.div`
  flex: 1;
  display: flex;
  flex-direction: column;
  margin: 1px 2px 0 0;
  border: solid #666;
  border-width: 1px 0 0 1px;
  background: ${(p) => p.$bg};
`;

const Preview = styled.div`
  height: 72px;
  padding: 3px;
  display: flex;
  align-items: center;
  justify-content: space-between;
  background: linear-gradient(90deg, #ececec, #f6f6f6 40%);
  span {
    width: 66px;
    height: 66px;
    padding: 6px 0 0 9px;
    border-right: 1px solid #e0e0e0;
    background: linear-gradient(#fafafa, #e8e8e8);
  }
`;

const TypeRow = styled.div`
  height: 26px;
  display: flex;
  align-items: center;
  gap: 5px;
  button {
    display: flex;
    align-items: center;
    gap: 4px;
    color: #9a9a9a;
  }
`;

const PropTable = styled.table`
  width: 100%;
  table-layout: fixed;
  border-collapse: collapse;
  td,
  th {
    height: 20px;
    padding: 0 0 0 2px;
    font-weight: 400;
    text-align: left;
    border: 1px dotted #999;
    border-width: 0 1px 1px 0;
    white-space: nowrap;
    overflow: hidden;
  }
  tbody th {
    padding-left: 10px;
  }
`;

const GroupRow = styled.tr`
  && th {
    padding: 0 0 0 2px;
    border: none;
    background: #dcdcdc;
    color: #111;
  }
  && span {
    display: flex;
    justify-content: space-between;
    padding-right: 6px;
    align-items: center;
  }
`;

const PropRow = styled.tr`
  color: ${(p) => (p.$off ? '#858585' : '#222')};
`;

const EditButton = styled.button`
  width: 100%;
  height: 17px;
  border: 1px solid #adadad;
  border-radius: 2px;
  background: #f4f4f4;
  color: #8a8a8a;
  line-height: 14px;
`;

const DockFooter = styled.footer`
  margin-top: auto;
  height: 22px;
  padding: 0 2px;
  display: flex;
  align-items: center;
  justify-content: space-between;
  a {
    color: #1568b3;
  }
  button {
    width: 73px;
    height: 20px;
    border: 1px solid #b9b9b9;
    border-radius: 3px;
    color: #8a8a8a;
  }
`;

const Mdi = styled.div`
  position: relative;
  flex: 1;
  min-width: 0;
  margin: 1px 6px 0 5px;
  border: solid #6c6c6c;
  border-width: 1px 0 0 1px;
  background: #ababab;
  overflow: hidden;
`;

const SubWindow = styled.section`
  position: absolute;
  left: ${(p) => p.$x}px;
  top: ${(p) => p.$y}px;
  width: ${(p) => p.$w}px;
  height: ${(p) => p.$h}px;
  display: flex;
  flex-direction: column;
  padding: 0 8px 7px;
  border: 1px solid ${(p) => (p.$front ? '#101820' : '#4c5560')};
  border-radius: 7px 7px 0 0;
  background: ${(p) =>
    p.$front
      ? 'linear-gradient(#94b4d8, #b4cce8 32px, #b5d0ee)'
      : 'linear-gradient(#c2cede, #d3dfec 32px, #d9e5f2)'};
  box-shadow: inset 1px 1px 0 rgba(255, 255, 255, 0.7);
`;

const SubTitle = styled.header`
  flex: none;
  height: 30px;
  display: flex;
  align-items: center;
  gap: 4px;
  padding: 4px 1px 0 0;
  color: ${(p) => (p.$front ? '#111' : '#4a5563')};
  h3 {
    flex: 1;
    margin: 0;
    font-size: 12px;
    font-weight: 400;
  }
`;

const SubKey = styled.button`
  width: 30px;
  height: 17px;
  margin-left: -1px;
  display: flex;
  align-items: center;
  justify-content: center;
  border: 1px solid ${(p) => (p.$red ? '#5e1f18' : '#76899f')};
  border-radius: 3px;
  background: ${(p) =>
    p.$red
      ? 'linear-gradient(#e8a594, #cf5338 50%, #c74220 50%, #e08a5c)'
      : 'linear-gradient(#d3e0ee, #bfd1e5 50%, #acc2da 50%, #c4d8ec)'};
`;

const Client = styled.div`
  flex: 1;
  min-height: 0;
  display: flex;
  flex-direction: column;
  border: solid #5f6f82;
  border-width: 1px 0 0 1px;
  background: #f0f0f0;
`;

const Canvas = styled.div`
  flex: 1;
  min-height: 0;
  display: flex;
`;

const View = styled.div`
  position: relative;
  flex: 1;
  min-width: 0;
  background: ${(p) => p.$bg};
  > svg {
    width: 100%;
    height: 100%;
  }
`;

const ScrollTrack = styled.div`
  flex: none;
  width: 17px;
  padding: 6px 0;
  display: flex;
  flex-direction: column;
  align-items: center;
  justify-content: space-between;
  background: #eee;
`;

const Thumb = styled.i`
  width: 15px;
  height: 15px;
  border: 1px solid #9a9a9a;
  border-radius: 2px;
  background: linear-gradient(90deg, #f6f6f6, #d3d3d3);
`;

const ViewBar = styled.footer`
  flex: none;
  height: ${(p) => p.$h || 18}px;
  display: flex;
  align-items: center;
  padding: 0 4px 2px 24px;
  background: #eee;
`;

const ViewScale = styled.span`
  width: 52px;
  font-family: 'Liberation Sans', sans-serif;
  font-size: 13px;
  white-space: pre;
`;

const HScroll = styled.div`
  flex: 1;
  display: flex;
  align-items: center;
  justify-content: space-between;
  padding: 0 20px 0 5px;
`;

const Tooltip = styled.div`
  position: absolute;
  left: 266px;
  top: 223px;
  height: 22px;
  padding: 2px 6px;
  border: 1px solid #767676;
  border-radius: 2px;
  background: linear-gradient(#fff, #e4e5f0);
  color: #575757;
  white-space: nowrap;
`;

const CubeHolder = styled.div`
  position: absolute;
  right: 18px;
  top: 36px;
`;

const TreeList = styled.ul`
  margin: 0;
  padding: 0;
  list-style: none;
  li {
    height: 20px;
    display: flex;
    align-items: center;
  }
`;

const Guide = styled.span`
  position: relative;
  flex: none;
  width: 20px;
  height: 20px;
  &::before {
    content: '';
    position: absolute;
    left: 9px;
    top: 0;
    height: ${(p) => (p.$kind === 'end' ? 10 : 20)}px;
    border-left: ${(p) => (p.$kind === 'none' ? 'none' : '1px dotted #999')};
  }
  &::after {
    content: '';
    position: absolute;
    left: 10px;
    right: ${(p) => (p.$long ? -4 : 0)}px;
    top: 10px;
    border-top: ${(p) => (p.$kind === 'line' || p.$kind === 'none' ? 'none' : '1px dotted #999')};
  }
  button {
    position: absolute;
    z-index: 1;
    left: 5px;
    top: 6px;
    width: 9px;
    height: 9px;
    border: 1px solid #8c8c8c;
    background: #fff;
    display: flex;
    align-items: center;
    justify-content: center;
  }
`;

const TreeText = styled.span`
  margin-left: ${(p) => p.$gap}px;
  padding: 0 2px;
  line-height: 20px;
  font-weight: ${(p) => (p.$current ? 700 : 400)};
  background: ${(p) => (p.$current ? '#e2e2e2' : 'none')};
`;

const TreeIcon = styled.span`
  width: 20px;
  display: flex;
  justify-content: center;
`;

const StatusBar = styled.footer`
  flex: none;
  height: 28px;
  padding: 0 22px 2px 1px;
  display: flex;
  align-items: center;
  justify-content: space-between;
  border-top: 1px solid #8e8e8e;
  color: #111;
`;

const CloseGlyph = ({size = 9, color = '#111', width = 2}) => (
  <Svg w={size} h={size} stroke={color} strokeWidth={width}>
    <path d={`M1 1L${size - 1} ${size - 1}M${size - 1} 1L1 ${size - 1}`} />
  </Svg>
);

function RevitTitle() {
  return (
    <TitleBar>
      <IconButton $w={28} aria-label="应用程序菜单"><RevitLogo size={20} /></IconButton>
      <IconButton aria-label="打开"><OpenIcon /></IconButton>
      <IconButton aria-label="保存"><SaveIcon /></IconButton>
      <IconButton aria-label="同步"><CubesIcon /></IconButton>
      <CaretButton aria-label="同步选项"><Caret /></CaretButton>
      <IconButton aria-label="放弃"><UndoIcon /></IconButton>
      <CaretButton aria-label="放弃列表"><Caret /></CaretButton>
      <IconButton aria-label="重做"><UndoIcon color="#aaa" flip /></IconButton>
      <CaretButton aria-label="重做列表"><Caret $color="#888" /></CaretButton>
      <IconButton aria-label="打印"><PrintIcon /></IconButton>
      <Divider />
      <IconButton aria-label="测量"><RulerIcon /></IconButton>
      <CaretButton aria-label="测量选项"><Caret /></CaretButton>
      <IconButton aria-label="对齐尺寸标注"><DimIcon /></IconButton>
      <IconButton aria-label="按类别标记"><TagIcon /></IconButton>
      <IconButton aria-label="文字"><LetterIcon /></IconButton>
      <Divider />
      <IconButton aria-label="默认三维视图"><HouseIcon /></IconButton>
      <CaretButton aria-label="三维选项"><Caret /></CaretButton>
      <IconButton aria-label="剖面"><SectionIcon /></IconButton>
      <IconButton aria-label="细线" $active><ThinLinesIcon /></IconButton>
      <Divider />
      <IconButton aria-label="关闭隐藏窗口"><CloseHiddenIcon /></IconButton>
      <IconButton aria-label="切换窗口"><SwitchIcon /></IconButton>
      <CaretButton aria-label="窗口列表"><Caret /></CaretButton>
      <IconButton $w={16} aria-label="自定义快速访问工具栏">
        <Svg w={10} h={10} stroke="#333">
          <path d="M1 1h8" strokeWidth="1.6" />
          <path d="M1 4h8L5 8z" fill="#333" stroke="none" />
        </Svg>
      </IconButton>
      <AppName>
        <span>Autodesk Revit 2018 -</span>
        <span>族3</span>
      </AppName>
      <CaretButton aria-label="展开搜索"><Caret $turn={-90} /></CaretButton>
      <Search aria-label="搜索" placeholder="键入关键字或短语" />
      <IconButton aria-label="查找"><BinocularsIcon /></IconButton>
      <IconButton aria-label="通讯中心"><DishIcon /></IconButton>
      <IconButton aria-label="收藏夹"><StarIcon /></IconButton>
      <IconButton aria-label="账户"><PersonIcon /></IconButton>
      <Login>登录</Login>
      <CaretButton aria-label="登录选项"><Caret /></CaretButton>
      <IconButton aria-label="Exchange 应用程序"><ExchangeIcon /></IconButton>
      <Divider $gap={5} />
      <IconButton aria-label="帮助"><HelpIcon /></IconButton>
      <CaretButton aria-label="帮助选项"><Caret /></CaretButton>
      <Divider $gap={8} $color="transparent" />
      <WindowKey aria-label="最小化"><Svg w={12} h={12} strokeWidth="2"><path d="M2 10h8" /></Svg></WindowKey>
      <WindowKey aria-label="最大化"><Svg w={13} h={12}><path d="M1 1h11v10H1zM1 2h11" strokeWidth="1.6" /></Svg></WindowKey>
      <WindowKey aria-label="关闭"><CloseGlyph size={12} color="#333" width={2.2} /></WindowKey>
    </TitleBar>
  );
}

const tabNames = [
  '创建', '插入', '视图', '管理', '附加模块', '族库大师V2.3',
  '橄榄山快模-免费版', '快图', 'GLS土建', 'GLS机电', 'GLS免费族酷',
];

function RevitTabs() {
  return (
    <Tabs>
      <Tab $file>文件</Tab>
      {tabNames.map((name) => (
        <Tab key={name}>{name}</Tab>
      ))}
      <Tab $active>修改 | 放置 线</Tab>
      <Divider $gap={10} $color="transparent" />
      <IconButton $w={18} $h={20} aria-label="最小化功能区">
        <Svg w={16} h={11} stroke="#333">
          <rect x="1" y="1" width="14" height="9" rx="3" fill="#eee" />
          <path d="M5 7l3-3 3 3z" fill="#333" stroke="none" />
        </Svg>
      </IconButton>
      <CaretButton aria-label="功能区选项"><Caret /></CaretButton>
    </Tabs>
  );
}

function RevitRibbon() {
  return (
    <Ribbon>
      <RibbonPanel $w={44}>
        <BigButton $w={40} $low>
          <CursorIcon />
          修改
          <Caret />
        </BigButton>
      </RibbonPanel>
      <RibbonPanel $w={82}>
        <IconGrid $cols={2} $cell={38} $gap={2}>
          <IconButton $w={38} $h={34} aria-label="族类别和族参数"><PropsGrayIcon /></IconButton>
          <IconButton $w={38} $h={34} aria-label="族类别"><FamilyFolderIcon /></IconButton>
          <IconButton $w={38} $h={34} $active aria-label="属性"><PropertiesIcon /></IconButton>
          <IconButton $w={38} $h={34} aria-label="族类型"><FamilyTypesIcon /></IconButton>
        </IconGrid>
      </RibbonPanel>
      <RibbonPanel $w={196} $pad="4px 2px 0 4px">
        <RibbonColumn>
          <IconButton $active aria-label="模型"><ModelLineIcon /></IconButton>
          <IconButton aria-label="参照"><RefLineIcon /></IconButton>
          <IconButton aria-label="参照平面"><RefPlaneIcon /></IconButton>
        </RibbonColumn>
        <Gallery>
          <IconGrid $cols={5} $cell={22}>
            {drawTools.map(([name, glyph]) => (
              <IconButton key={name} $w={22} aria-label={name} $active={name === '圆形'}>
                <Svg>{glyph}</Svg>
              </IconButton>
            ))}
          </IconGrid>
          <GalleryScroll>
            <button aria-label="上一行"><Caret $turn={180} $color="#555" /></button>
            <button aria-label="下一行"><Caret $color="#555" /></button>
            <button aria-label="更多">
              <Svg w={8} h={9} stroke="#444"><path d="M0 1h8M0 3h8" /><path d="M0 5h8L4 9z" fill="#444" stroke="none" /></Svg>
            </button>
          </GalleryScroll>
        </Gallery>
        <RibbonColumn $gap={1}>
          <IconButton $w={36} $h={34} $faded aria-label="在面上绘制"><DrawFaceIcon /></IconButton>
          <IconButton $w={36} $h={34} aria-label="在工作平面上绘制"><DrawFaceIcon lines /></IconButton>
        </RibbonColumn>
      </RibbonPanel>
      <RibbonPanel $w={67}>
        <BigButton $w={38}>
          <WorkPlaneIcon />
          设置
        </BigButton>
        <RibbonColumn $top={14}>
          <IconButton $faded aria-label="显示"><ShowPlaneIcon /></IconButton>
          <IconButton aria-label="查看器"><ViewerIcon /></IconButton>
        </RibbonColumn>
      </RibbonPanel>
      <RibbonPanel $w={77}>
        <BigButton $w={48} $color="#a5a5a5">
          <PasteIcon />
          粘贴
          <Caret $color="#888" />
        </BigButton>
        <RibbonColumn>
          <IconButton aria-label="剪切到剪贴板"><CutIcon /></IconButton>
          <IconButton aria-label="复制到剪贴板"><CopyClipIcon /></IconButton>
          <IconButton aria-label="匹配类型属性"><MatchIcon /></IconButton>
        </RibbonColumn>
      </RibbonPanel>
      <RibbonPanel $w={81} $gap={3}>
        <RibbonColumn $top={14}>
          <RibbonRow>
            <IconButton $w={26} aria-label="剪切"><CutGeoIcon /></IconButton>
            <CaretButton aria-label="剪切选项"><Caret /></CaretButton>
          </RibbonRow>
          <RibbonRow>
            <IconButton $w={26} aria-label="连接"><JoinGeoIcon /></IconButton>
            <CaretButton aria-label="连接选项"><Caret /></CaretButton>
          </RibbonRow>
        </RibbonColumn>
        <RibbonColumn $top={14}>
          <IconButton aria-label="洞口"><OpeningIcon /></IconButton>
          <RibbonRow>
            <IconButton aria-label="填色"><PaintIcon /></IconButton>
            <CaretButton aria-label="填色选项"><Caret /></CaretButton>
          </RibbonRow>
        </RibbonColumn>
      </RibbonPanel>
      <RibbonPanel $w={171} $gap={5}>
        <RibbonColumn>
          <IconButton $w={38} $h={34} aria-label="对齐"><AlignIcon /></IconButton>
          <IconButton $w={38} $h={34} aria-label="移动"><MoveIcon /></IconButton>
        </RibbonColumn>
        <IconGrid $cols={5} $cell={25}>
          {modifyTools.map(([name, glyph]) => (
            <IconButton key={name} $w={24} $h={24} aria-label={name}>
              <Svg>{glyph}</Svg>
            </IconButton>
          ))}
        </IconGrid>
      </RibbonPanel>
      <RibbonPanel $w={60} $edge="#dbe5cc">
        <RibbonColumn>
          <RibbonRow>
            <IconButton $w={40} $h={34} aria-label="测量"><MeasureIcon /></IconButton>
            <CaretButton aria-label="测量方式"><Caret /></CaretButton>
          </RibbonRow>
          <RibbonRow>
            <IconButton $w={40} $h={34} aria-label="标注"><AlignedDimIcon /></IconButton>
            <CaretButton aria-label="标注方式"><Caret /></CaretButton>
          </RibbonRow>
        </RibbonColumn>
      </RibbonPanel>
      <RibbonPanel $w={51}>
        <BigButton $w={46}>
          <CreateFormIcon />
          <TwoLines>
            <span>
              创建
              <br />
              形状
            </span>
            <Caret />
          </TwoLines>
        </BigButton>
      </RibbonPanel>
      <RibbonPanel $w={105}>
        <RibbonColumn $top={16} $gap={4}>
          <FormLabel htmlFor="subcategory">
            <SubCategoryIcon />
            子类别:
          </FormLabel>
          <SelectBox $w="100px">
            <select id="subcategory" defaultValue="形式 [投影]">
              <option>形式 [投影]</option>
            </select>
          </SelectBox>
        </RibbonColumn>
      </RibbonPanel>
      <RibbonPanel $w={61} $bg="#e0e8d2" $edge="#cfd8c0">
        <BigButton $w={56} $low>
          <OliveIcon />
          橄榄山(...
          <Caret />
        </BigButton>
      </RibbonPanel>
      <RibbonPanel $w={61} $bg="#c5c9e6" $edge="#c5c9e6">
        <BigButton $w={56} $low>
          <LoadIcon />
          族编辑器
          <Caret $color="#334" />
        </BigButton>
      </RibbonPanel>
    </Ribbon>
  );
}

function OptionsBar() {
  const line = '#a9b09c';
  return (
    <Options>
      <Text $color="#8b9184">修改 | 放置 线</Text>
      <Divider $gap={18} $color={line} />
      <label>
        放置平面:
        <SelectBox $w="112px">
          <select defaultValue="标高 : 标高 1">
            <option>标高 : 标高 1</option>
          </select>
        </SelectBox>
      </label>
      <Divider $gap={10} $color={line} />
      <IconButton type="button" $w={20} $h={20} aria-label="显示主体">
        <PlacementIcon />
      </IconButton>
      <Divider $gap={9} $color={line} />
      <label>
        <Check />
        根据闭合的环生成表面
      </label>
      <Divider $gap={10} $color={line} />
      <label>
        <Check disabled defaultChecked />
        <Text $color="#868b80">链</Text>
      </label>
      <Divider $gap={7} $color="transparent" />
      <label>
        偏移:
        <NumberBox $w={118} defaultValue="0.0" />
      </label>
      <Divider $gap={3} $color="transparent" />
      <Check id="radius-on" />
      <Divider $gap={2} $color="transparent" />
      <label htmlFor="radius-on">半径:</label>
      <Divider $gap={4} $color="transparent" />
      <NumberBox $w={120} disabled defaultValue="1000.0" aria-label="半径" />
    </Options>
  );
}

const propGroups = [
  ['约束', [['工作平面', '标高 : 标高 1', true]]],
  ['图形', [['可见', <Check disabled defaultChecked aria-label="可见" />], ['可见性/图形替换', <EditButton>编辑...</EditButton>]]],
  ['标识数据', [['子类别', '形式 [投影]'], ['是参照线', <Check disabled aria-label="是参照线" />, true]]],
  ['其他', [['参照', '弱参照'], ['模型或符号', '模型线', true]]],
];

function Properties() {
  return (
    <Dock>
      <DockTitle>
        属性
        <IconButton $w={12} $h={12} aria-label="关闭属性"><CloseGlyph /></IconButton>
      </DockTitle>
      <DockBody $bg="#f0f0f0">
        <Preview>
          <span><RevitLogo size={46} gray /></span>
          <Caret $color="#888" />
        </Preview>
        <TypeRow>
          <SelectBox $w="133px" $h={24} $round>
            <select aria-label="类型" defaultValue="新建 线 (体量)">
              <option>新建 线 (体量)</option>
            </select>
          </SelectBox>
          <button>
            <TypeEditIcon />
            编辑类型
          </button>
        </TypeRow>
        <PropTable>
          <colgroup>
            <col style={{width: 102}} />
            <col />
            <col style={{width: 12}} />
          </colgroup>
          <tbody>
            {propGroups.map(([group, rows]) => (
              <React.Fragment key={group}>
                <GroupRow>
                  <th colSpan="3">
                    <span>
                      {group}
                      <Svg w={7} h={9} stroke="#111" strokeWidth="1.5">
                        <path d="M1 4l2.500-3L6 4M1 8l2.500-3L6 8" />
                      </Svg>
                    </span>
                  </th>
                </GroupRow>
                {rows.map(([name, value, off]) => (
                  <PropRow key={name} $off={off}>
                    <th scope="row">{name}</th>
                    <td>{value}</td>
                    <td />
                  </PropRow>
                ))}
              </React.Fragment>
            ))}
          </tbody>
        </PropTable>
        <DockFooter>
          <a href="#help">属性帮助</a>
          <button>应用</button>
        </DockFooter>
      </DockBody>
    </Dock>
  );
}

function WindowKeys({front}) {
  const c = '#4b5a6c';
  return (
    <>
      <SubKey aria-label="最小化"><Svg w={12} h={10} stroke={c}><rect x="2" y="5" width="8" height="3" fill="#fff" /></Svg></SubKey>
      <SubKey aria-label="还原"><Svg w={12} h={10} stroke={c}><rect x="2" y="1" width="8" height="8" fill="#fff" /><rect x="5" y="4" width="2" height="2" /></Svg></SubKey>
      <SubKey $red={front} aria-label="关闭">
        <Svg w={12} h={10} stroke={front ? '#6b2a20' : c}>
          <path d="M1 1h3l2 2 2-2h3L8 5l3 4H8L6 7 4 9H1l3-4z" fill="#fff" strokeWidth="1" />
        </Svg>
      </SubKey>
    </>
  );
}

const ViewCube = () => (
  <svg width="100" height="82" viewBox="0 0 100 82" fill="none" stroke="#a5a5a5" aria-hidden="true">
    <ellipse cx="50" cy="50" rx="48" ry="30" />
    <ellipse cx="50" cy="48" rx="37" ry="23" />
    <path d="M24 46l26 22 26-22-26-6z" fill="#bbb" stroke="none" />
    <path d="M24 16L50 3l26 13v30L50 61 24 44z" fill="#ececec" stroke="#8d8d8d" />
    <path d="M24 16l26 14 26-14M50 30v31" stroke="#8d8d8d" />
    <g fill="#999" stroke="none" fontSize="12">
      <text x="44" y="20">上</text>
      <text x="31" y="41" transform="rotate(14 31 41)">前</text>
      <text x="57" y="46" transform="rotate(-14 57 46)">右</text>
    </g>
    <g fill="#aaa" stroke="none" fontSize="11">
      <text x="9" y="74">南</text>
      <text x="79" y="74">东</text>
      <text x="14" y="34" fontSize="9">西</text>
      <text x="77" y="34" fontSize="9">北</text>
    </g>
  </svg>
);

function View3D() {
  return (
    <SubWindow $x={82} $y={74} $w={577} $h={593}>
      <SubTitle>
        <RvtIcon />
        <h3>三维视图: {'{3D}'} - 族3</h3>
        <WindowKeys />
      </SubTitle>
      <Client>
        <Canvas>
          <View $bg="linear-gradient(#efefef, #a9a9a9)">
            <CubeHolder>
              <ViewCube />
            </CubeHolder>
          </View>
          <ScrollTrack>
            <Caret $turn={180} />
          </ScrollTrack>
        </Canvas>
        <ViewBar $h={20} />
      </Client>
    </SubWindow>
  );
}

const viewIcons = [
  <path d="M3 3h15v12H3z" fill="#f4f4f4" />,
  <path d="M3 8l4-4h11v8l-4 4H3zM3 8h11v8M14 8l4-4" fill="#a9d6f5" stroke={blue} />,
  <><path d="M2 15h4V5h10v6M6 5h12" stroke={blue} strokeWidth="1.6" /><path d="M9 8l8 8M17 8l-8 8" stroke="#d23a2b" strokeWidth="2" /></>,
  <><path d="M2 15h4V5h7M9 5v10" stroke={blue} strokeWidth="1.6" /><circle cx="15" cy="7" r="3" fill="#dbeefa" stroke={blue} /><path d="M14 11h2v4h-2z" /></>,
  <path d="M2 6h4l4 5M10 11a2 3 0 1 0-3 4c2 0 3-2 4-4s3 3 5 0 0-5-3-3M16 8V4h2" />,
  <><path d="M3 3v13M3 5h13M16 3v6" /><path d="M3 13h8" strokeDasharray="2 1" /><path d="M12 11h6v5h-6z" fill="#777" /></>,
  <><path d="M3 4h13v8H3zM3 15h9" /><circle cx="15" cy="9" r="3" fill="#b6dcf7" stroke={blue} /><path d="M14 12h2v4h-2z" stroke={blue} /></>,
];

function FloorPlan() {
  return (
    <SubWindow $x={112} $y={225} $w={686} $h={555} $front>
      <SubTitle $front>
        <RvtIcon />
        <h3>楼层平面: 标高 1 - 族3</h3>
        <WindowKeys front />
      </SubTitle>
      <Client>
        <Canvas>
          <View $bg="#fff">
            <svg fill="none" stroke="#444" aria-hidden="true">
              <path d="M193 198.5L392 0M193 199L490 496M584 496L700 380" />
              <circle cx="193" cy="199" r="72.5" stroke="#888" />
              <path d="M537.5 3V600" strokeDasharray="17 17" />
              <path d="M0 198.5H648" stroke="#8fb2ee" strokeDasharray="4 3" opacity="0.6" />
              <path d="M193 198.5H310" stroke="#7fb0f2" />
              <path d="M1 198.5H648" stroke="#3d5fb5" strokeWidth="2.5" strokeDasharray="19 15" />
              <path d="M193.5 173v26M266.5 173v26M188 203l10-9" stroke="#9aaef0" strokeWidth="1.5" />
              <DimText x="218" y="192">90.0</DimText>
              <path d="M259 198.5h4M270 198.5h4M262 195l-4 3.500 4 3.500M271 195l4 3.500-4 3.500" stroke="#c569cf" strokeWidth="1.5" />
              <path d="M255 203.5h10M268 203.5h10M266.5 192v10M266.5 206v10" stroke="#000" strokeWidth="1.5" />
              <circle cx="278" cy="215" r="7" fill="#f6f6f6" stroke="#222" />
              <path d="M278 215l5-5" stroke="#222" />
              <path d="M276 214h3v3h-3zM282 209h3v3h-3z" fill="#222" stroke="none" />
            </svg>
            <Tooltip role="tooltip">水平 和 最近点</Tooltip>
          </View>
          <ScrollTrack>
            <Caret $turn={180} />
            <Thumb />
            <Caret />
          </ScrollTrack>
        </Canvas>
        <ViewBar>
          <ViewScale>1 : 20</ViewScale>
          {viewIcons.map((glyph, i) => (
            <IconButton key={i} $w={21} $h={16} aria-label={`视图控制 ${i + 1}`}>
              <Svg w={20} h={18}>{glyph}</Svg>
            </IconButton>
          ))}
          <HScroll>
            <Caret $turn={90} />
            <Thumb />
            <Caret $turn={-90} />
          </HScroll>
        </ViewBar>
      </Client>
    </SubWindow>
  );
}

const DimText = styled.text`
  && {
    font: 700 11px 'Liberation Sans', sans-serif;
  }
  fill: #1e4b9e;
  stroke: none;
`;

const ViewsIcon = () => (
  <Svg w={16} h={16}>
    <path d="M4 1H1v3M12 1h3v3M15 12v3h-3M4 15H1v-3M5 6l2-2h5v5l-2 3H5z" />
  </Svg>
);
const SheetsIcon = () => (
  <Svg w={16} h={14}>
    <path d="M1 1h11l3 3v9H1z" fill="#e4e4e4" />
    <path d="M3 5h8v6H3zM3 8h4v3M12 1v3h3" strokeWidth="1" />
  </Svg>
);
const FamiliesIcon = () => (
  <Svg w={16} h={14}>
    <path d="M1 1h7v6H1zM11 1h4v12H1v-3h10z" fill="#e9ebee" />
  </Svg>
);

const tree = [
  {text: '视图 (全部)', guides: ['tee'], box: '-', icon: <ViewsIcon />},
  {text: '楼层平面', guides: ['line', 'tee'], box: '-'},
  {text: '标高 1', guides: ['line', 'line', 'end'], current: true},
  {text: '三维视图', guides: ['line', 'tee'], box: '-'},
  {text: '{3D}', guides: ['line', 'line', 'tee']},
  {text: '三维视图 1', guides: ['line', 'line', 'end']},
  {text: '立面 (立面 1)', guides: ['line', 'end'], box: '-'},
  {text: '东', guides: ['line', 'none', 'tee']},
  {text: '北', guides: ['line', 'none', 'tee']},
  {text: '南', guides: ['line', 'none', 'tee']},
  {text: '西', guides: ['line', 'none', 'end']},
  {text: '图纸 (全部)', guides: ['tee'], icon: <SheetsIcon />},
  {text: '族', guides: ['end'], box: '+', icon: <FamiliesIcon />},
];

function ProjectBrowser() {
  return (
    <Dock>
      <DockTitle>
        项目浏览器 - 族3
        <IconButton $w={12} $h={12} aria-label="关闭项目浏览器"><CloseGlyph /></IconButton>
      </DockTitle>
      <DockBody $bg="#fff">
        <TreeList>
          {tree.map(({text, guides, box, icon, current}) => (
            <li key={text}>
              {guides.map((kind, i) => (
                <Guide key={i} $kind={kind} $long={i > 0}>
                  {box && i === guides.length - 1 && (
                    <button aria-label={`展开 ${text}`}>
                      <Svg w={7} h={7} strokeWidth="1">
                        <path d={box === '+' ? 'M1 3.5h5M3.5 1v5' : 'M1 3.5h5'} />
                      </Svg>
                    </button>
                  )}
                </Guide>
              ))}
              {icon && <TreeIcon>{icon}</TreeIcon>}
              <TreeText $gap={icon ? 1 : 5} $current={current}>{text}</TreeText>
            </li>
          ))}
        </TreeList>
      </DockBody>
    </Dock>
  );
}

/* ---------- floating bars ---------- */

const Recorder = styled.div`
  position: absolute;
  right: 273px;
  bottom: 0;
  width: 350px;
  height: 23px;
  padding: 0 5px 0 4px;
  display: flex;
  align-items: center;
  justify-content: space-between;
  border: 1px solid #000;
  background: repeating-linear-gradient(135deg, #111 0 3px, #2e2e2e 3px 4px);
  color: #e6e6e6;
`;

const RecorderGroup = styled.div`
  display: flex;
  align-items: center;
  gap: ${(p) => p.$gap}px;
`;

const RecordKey = styled.button`
  display: flex;
  align-items: center;
  justify-content: center;
  width: 14px;
  height: 20px;
`;

function RecorderBar() {
  const pen = {stroke: '#eee', strokeWidth: 1.3, w: 14, h: 14};
  return (
    <Recorder>
      <RecorderGroup $gap={7}>
        <RecordKey aria-label="菜单"><Svg w={12} h={8} stroke="none"><path d="M0 1h11L5.500 7z" fill="#fff" /></Svg></RecordKey>
        <RecordKey aria-label="窗口"><Svg {...pen}><path d="M5 2h7v7H5zM2 5h7v7H2z" /></Svg></RecordKey>
        <RecordKey aria-label="缩放"><Svg {...pen}><circle cx="6" cy="6" r="4" /><path d="M9 9l4 4" strokeWidth="2" /></Svg></RecordKey>
        <RecordKey aria-label="区域"><Svg {...pen}><path d="M12 2v10H2" strokeDasharray="2 1" /><path d="M2 12V2h10" /></Svg></RecordKey>
      </RecorderGroup>
      <Text>正在录制 [00:04:51]</Text>
      <RecorderGroup $gap={7}>
        <RecorderGroup $gap={10}>
          <RecordKey aria-label="暂停"><Svg w={14} h={14} stroke="none"><path d="M4 3h3v9H4zM8 3h3v9H8z" fill="#d11f0f" /></Svg></RecordKey>
          <RecordKey aria-label="停止"><Svg w={14} h={14} stroke="none"><path d="M2 3h9v9H2z" fill="#f02a12" /></Svg></RecordKey>
          <RecordKey aria-label="截图">
            <Svg w={14} h={14} stroke="none">
              <path d="M0 3h4l1-2h4l1 2h4v10H0z" fill="#fff" />
              <circle cx="7" cy="8" r="3" fill="#222" />
            </Svg>
          </RecordKey>
        </RecorderGroup>
        <Divider $h={14} $gap={0} $color="#777" />
        <RecordKey aria-label="画笔"><Svg w={14} h={14} stroke="none"><path d="M1 13l2-5 7-7 3 3-7 7z" fill="#fff" /></Svg></RecordKey>
        <Divider $h={14} $gap={0} $color="#777" />
        <RecordKey aria-label="关闭录制"><CloseGlyph size={10} color="#eee" width={1.2} /></RecordKey>
      </RecorderGroup>
    </Recorder>
  );
}

const ImeBar = styled.div`
  position: absolute;
  right: 0;
  bottom: 0;
  height: 24px;
  width: 185px;
  padding-right: 3px;
  display: flex;
  align-items: center;
  justify-content: space-between;
  border-radius: 3px 0 0 3px;
  background: linear-gradient(90deg, transparent 10px, #fbfcfe 10px);
  color: #1f6fc1;
  font-weight: 700;
`;

const ImeText = styled.span`
  font-size: 14px;
`;

const SogouLogo = ({size}) => (
  <Svg w={size} h={size} stroke="none" viewBox="0 0 28 28">
    <rect x="2" y="2" width="24" height="24" rx="4" fill="#f0561d" transform="rotate(-6 14 14)" />
    <text x="14" y="23" textAnchor="middle" fontSize="25" fontWeight="800" fill="#fff" transform="rotate(-6 14 14)">S</text>
  </Svg>
);

function InputMethodBar() {
  const c = '#1f6fc1';
  return (
    <ImeBar>
      <SogouLogo size={28} />
      <ImeText>英</ImeText>
      <Svg w={16} h={16} stroke="none"><path d="M10 1c5 4 4 12-4 13-3 0-4-1-5-2 7 1 10-4 9-11z" fill={c} /></Svg>
      <Svg w={14} h={16} stroke={c} strokeWidth="2"><circle cx="4" cy="5" r="1" /><path d="M10 8c1 2 0 4-2 5" /></Svg>
      <Svg w={17} h={16} stroke={c}>
        <rect x="1" y="2" width="15" height="11" strokeWidth="1.6" />
        <path d="M3 5h11M3 8h11M5 11h7" strokeDasharray="2 1" strokeWidth="1.6" />
      </Svg>
      <Svg w={18} h={18} stroke="none">
        <circle cx="8" cy="4" r="3" fill="#b4b9c0" />
        <path d="M2 14c0-8 12-8 12 0z" fill="#b4b9c0" />
        <path d="M6 9h11v8H6z" fill="#e8ebef" />
        <text x="7" y="16" fontSize="8" fill="#8e949c">20</text>
      </Svg>
      <Svg w={16} h={16} stroke="none"><path d="M0 4l5-3c2 2 4 2 6 0l5 3-2 4-2-1v8H4V7L2 8z" fill={c} /></Svg>
      <Svg w={16} h={16} stroke="none"><path d="M14 2l-3 3-1-1 3-3c-4-1-7 2-6 6l-6 6 2 3 7-7c4 1 7-3 6-7z" fill={c} /></Svg>
    </ImeBar>
  );
}

/* ---------- taskbar ---------- */

const Taskbar = styled.footer`
  flex: none;
  height: 39px;
  display: flex;
  align-items: stretch;
  border-top: 1px solid #1d3a56;
  background: linear-gradient(
    90deg,
    #2b4058 0%,
    #3a506c 10%,
    #34496a 18%,
    #43587a 28%,
    #4a668c 38%,
    #42668f 50%,
    #3e5980 62%,
    #4a6994 72%,
    #5b84b4 82%,
    #6190c0 92%,
    #496a90 96%
  );
`;

const StartButton = styled.button`
  width: 56px;
  display: flex;
  align-items: center;
  justify-content: center;
`;

const Grip = styled.i`
  width: 8px;
  margin: 3px 0;
  background: radial-gradient(circle, #16283c 1px, transparent 1px) 0 0 / 4px 4px;
`;

const TaskButton = styled.button`
  width: ${(p) => p.$w || 50}px;
  display: flex;
  align-items: center;
  justify-content: center;
  ${(p) =>
    p.$open &&
    css`
      border: 1px solid #a9b7c6;
      border-radius: 2px;
      background: linear-gradient(rgba(255, 255, 255, 0.4), rgba(255, 255, 255, 0.1));
    `}
  ${(p) =>
    p.$front &&
    css`
      background: linear-gradient(90deg, #8d9db0, #d9dfe6 30%, #d9dfe6 70%, #8d9db0);
    `}
`;

const TaskRow = styled.div`
  display: flex;
  gap: 3px;
  padding-left: 12px;
`;

const TaskGap = styled.i`
  width: ${(p) => p.$w}px;
`;

const GroupEdge = styled.i`
  width: 4px;
  margin: 0 2px 0 -3px;
  border: solid #8494a8;
  border-width: 0 1px;
`;

const Tray = styled.div`
  margin-left: auto;
  display: flex;
  align-items: stretch;
  gap: 14px;
`;

const TrayItem = styled.div`
  display: flex;
  flex-direction: column;
  align-items: center;
  justify-content: center;
  gap: 6px;
`;

const ShowDesktop = styled.button`
  width: 14px;
  border-left: 1px solid #b3c6da;
  background: linear-gradient(135deg, #8aa0b8, #3f5a78);
`;

function SystemTaskbar() {
  return (
    <Taskbar>
      <StartButton aria-label="开始">
        <Svg w={38} h={38} stroke="none">
          <defs>
            <radialGradient id="orb" cx="0.5" cy="0.9" r="0.9">
              <stop offset="0" stopColor="#4fd0f5" />
              <stop offset="0.5" stopColor="#1f6aa8" />
              <stop offset="1" stopColor="#8fb4cf" />
            </radialGradient>
          </defs>
          <circle cx="19" cy="19" r="18" fill="url(#orb)" stroke="#1a3958" />
          <path d="M11 12c4-3 5-2 8 0l-2 7c-3-2-5-2-8 0z" fill="#f0602b" />
          <path d="M20 12c3 2 5 2 9 0l-3 7c-3 2-5 1-8 0z" fill="#8cc63e" />
          <path d="M9 20c3-2 5-1 8 0l-2 7c-3-2-4-2-8 0z" fill="#3fa5e8" />
          <path d="M18 20c3 2 5 2 8 0l-2 7c-3 2-5 2-8 0z" fill="#fcc92c" />
        </Svg>
      </StartButton>
      <Grip />
      <TaskRow>
        <TaskButton $w={59} $open $front aria-label="Revit">
          <Svg w={32} h={32} stroke="none">
            <path d="M0 0h32v32H0z" fill="#e6eff8" />
            <text x="16" y="27" textAnchor="middle" fontSize="31" fontWeight="800" fill="#1e5ea3">R</text>
          </Svg>
        </TaskButton>
        <TaskButton $w={60} aria-label="天正">
          <Svg w={34} h={34} stroke="none">
            <path d="M0 1h33v4H0zM0 7h4v7H0zM29 7h4v5h-4zM8 7h6v25H8zM17 7h5v12h-5z" fill="#fff" />
            <path d="M8 28c2-6 6-8 10-8v12l-4-3z" fill="#d4381f" />
            <path d="M1 26c2-2 4-1 6 1l-3 5c-3-1-4-4-3-6z" fill="#1e74d0" />
            <path d="M25 20l5-6 4 3-5 6z" fill="#8a6a3a" />
            <rect x="23" y="25" width="8" height="7" fill="#1c7bd6" stroke="#fff" strokeWidth="1.6" />
            <path d="M27 22v3M27 32v2M20 29h3M31 29h3" stroke="#fff" strokeWidth="1.6" />
          </Svg>
        </TaskButton>
      </TaskRow>
      <TaskRow>
        <TaskButton $w={38} aria-label="QQ">
          <Svg w={30} h={34} stroke="none">
            <ellipse cx="15" cy="20" rx="12" ry="11" fill="#0c0c0c" />
            <ellipse cx="15" cy="10" rx="8" ry="9" fill="#0c0c0c" />
            <ellipse cx="15" cy="23" rx="8" ry="8" fill="#fff" />
            <ellipse cx="12" cy="7" rx="2" ry="3" fill="#fff" />
            <ellipse cx="18" cy="7" rx="2" ry="3" fill="#fff" />
            <circle cx="12.5" cy="8" r="1" fill="#000" />
            <circle cx="17.5" cy="8" r="1" fill="#000" />
            <ellipse cx="15" cy="12" rx="6" ry="2" fill="#f7a51c" />
            <path d="M5 14c6 4 14 4 20 0v4c-6 4-14 4-20 0z" fill="#e5261f" />
            <path d="M8 18h4v6H8z" fill="#e5261f" />
            <path d="M5 31h9v2H5zM16 31h9v2h-9z" fill="#f7a51c" />
          </Svg>
        </TaskButton>
        <TaskGap $w={19} />
        <TaskButton $w={38} aria-label="迅雷">
          <Svg w={32} h={32} stroke="none">
            <defs>
              <linearGradient id="bird" x1="0" y1="0" x2="1" y2="1">
                <stop offset="0" stopColor="#4aa0ec" />
                <stop offset="1" stopColor="#7f74dc" />
              </linearGradient>
            </defs>
            <rect width="32" height="32" rx="3" fill="#f4f8fd" />
            <path d="M3 7c7 1 9 3 12 7 1-6 3-8 9-10v5l5 2-3 1c0 7-3 9-6 11l-6 6 1-5-9-1 6-3c-5-1-8-6-9-13z" fill="url(#bird)" />
          </Svg>
        </TaskButton>
        <TaskGap $w={7} />
        <TaskButton $w={50} $open aria-label="资源管理器">
          <Svg w={34} h={34} stroke="none">
            <path d="M2 6l8-3h21v5H2z" fill="#f6f3e0" />
            <path d="M4 4h4v3H4z" fill="#3fa34a" />
            <path d="M12 4h4v3h-4zM22 4h4v3h-4z" fill="#d8622c" />
            <path d="M1 9h32v20H1z" fill="#f6dc84" />
            <path d="M1 13h32v16H1z" fill="#efcd66" />
            <path d="M5 32V22h24v10h-4v-5H9v5z" fill="#8ccbee" stroke="#4c93c4" />
          </Svg>
        </TaskButton>
        <GroupEdge />
        <TaskButton $w={59} $open aria-label="看图">
          <Svg w={32} h={34} stroke="none">
            <defs>
              <linearGradient id="photo" x1="0" y1="0" x2="1" y2="1">
                <stop offset="0" stopColor="#3cc0f5" />
                <stop offset="1" stopColor="#7d4fe0" />
              </linearGradient>
            </defs>
            <path d="M16 1l14 7v18l-14 7-14-7V8z" fill="url(#photo)" />
            <path d="M7 23c1-4 4-9 7-9s3 4 5 4 5 1 6 5z" fill="#dfe4ff" />
            <circle cx="20" cy="12" r="2" fill="#fff" />
          </Svg>
        </TaskButton>
        <TaskButton $w={59} $open aria-label="录屏">
          <Svg w={32} h={32} stroke="#ccc">
            <circle cx="16" cy="16" r="15" fill="#101010" strokeWidth="1.5" />
            <circle cx="16" cy="16" r="9" fill="#f8250f" stroke="#a31206" />
          </Svg>
        </TaskButton>
      </TaskRow>
      <Tray>
        <Grip />
        <TrayItem>
          <SogouLogo size={18} />
        </TrayItem>
        <TrayItem>
          <Svg w={10} h={9} stroke="#fff" strokeWidth="1"><path d="M4 1h5v4H4zM1 4h5v4H1z" /></Svg>
          <Caret $color="#fff" />
        </TrayItem>
        <TrayItem>
          <Caret $color="#fff" $turn={180} />
        </TrayItem>
        <ShowDesktop aria-label="显示桌面" />
      </Tray>
    </Taskbar>
  );
}

export default function App() {
  return (
    <Desktop>
      <GlobalStyle />
      <Workspace>
        <Wallpaper>
          <Svg w={12} h={8} stroke="#3d5a74"><path d="M3 1h8v6M1 4h7v6H1z" fill="#eef6fa" /></Svg>
          <Svg w={12} h={8} stroke="#3d5a74"><path d="M1 1h3l2 2 2-2h3L7 7H5z" fill="#eef6fa" /></Svg>
        </Wallpaper>
        <BackRow>
          <BackWindow>
            <span />
            <b />
            <i />
          </BackWindow>
          <BackWindow $right>
            <span />
            <b />
            <i />
          </BackWindow>
        </BackRow>
        <ImageViewer />
        <Revit>
          <RevitTitle />
          <RevitTabs />
          <RevitRibbon />
          <OptionsBar />
          <Body>
            <Properties />
            <Mdi>
              <View3D />
              <FloorPlan />
            </Mdi>
            <ProjectBrowser />
          </Body>
          <StatusBar>
            水平 和 [参照平面 : 参照平面 : 中心(前/后)]
            <Svg w={64} h={12} strokeWidth="1.5">
              <path d="M2 2h5l2 3 2-3h5v6H2z" stroke="#d99a16" />
              <path d="M34 1h8l-4 8h-8z" stroke="#4a79a8" />
              <path d="M52 1h8v4h-8zM52 8h8" stroke="#c9622e" />
            </Svg>
          </StatusBar>
        </Revit>
        <RecorderBar />
        <InputMethodBar />
      </Workspace>
      <SystemTaskbar />
    </Desktop>
  );
}
